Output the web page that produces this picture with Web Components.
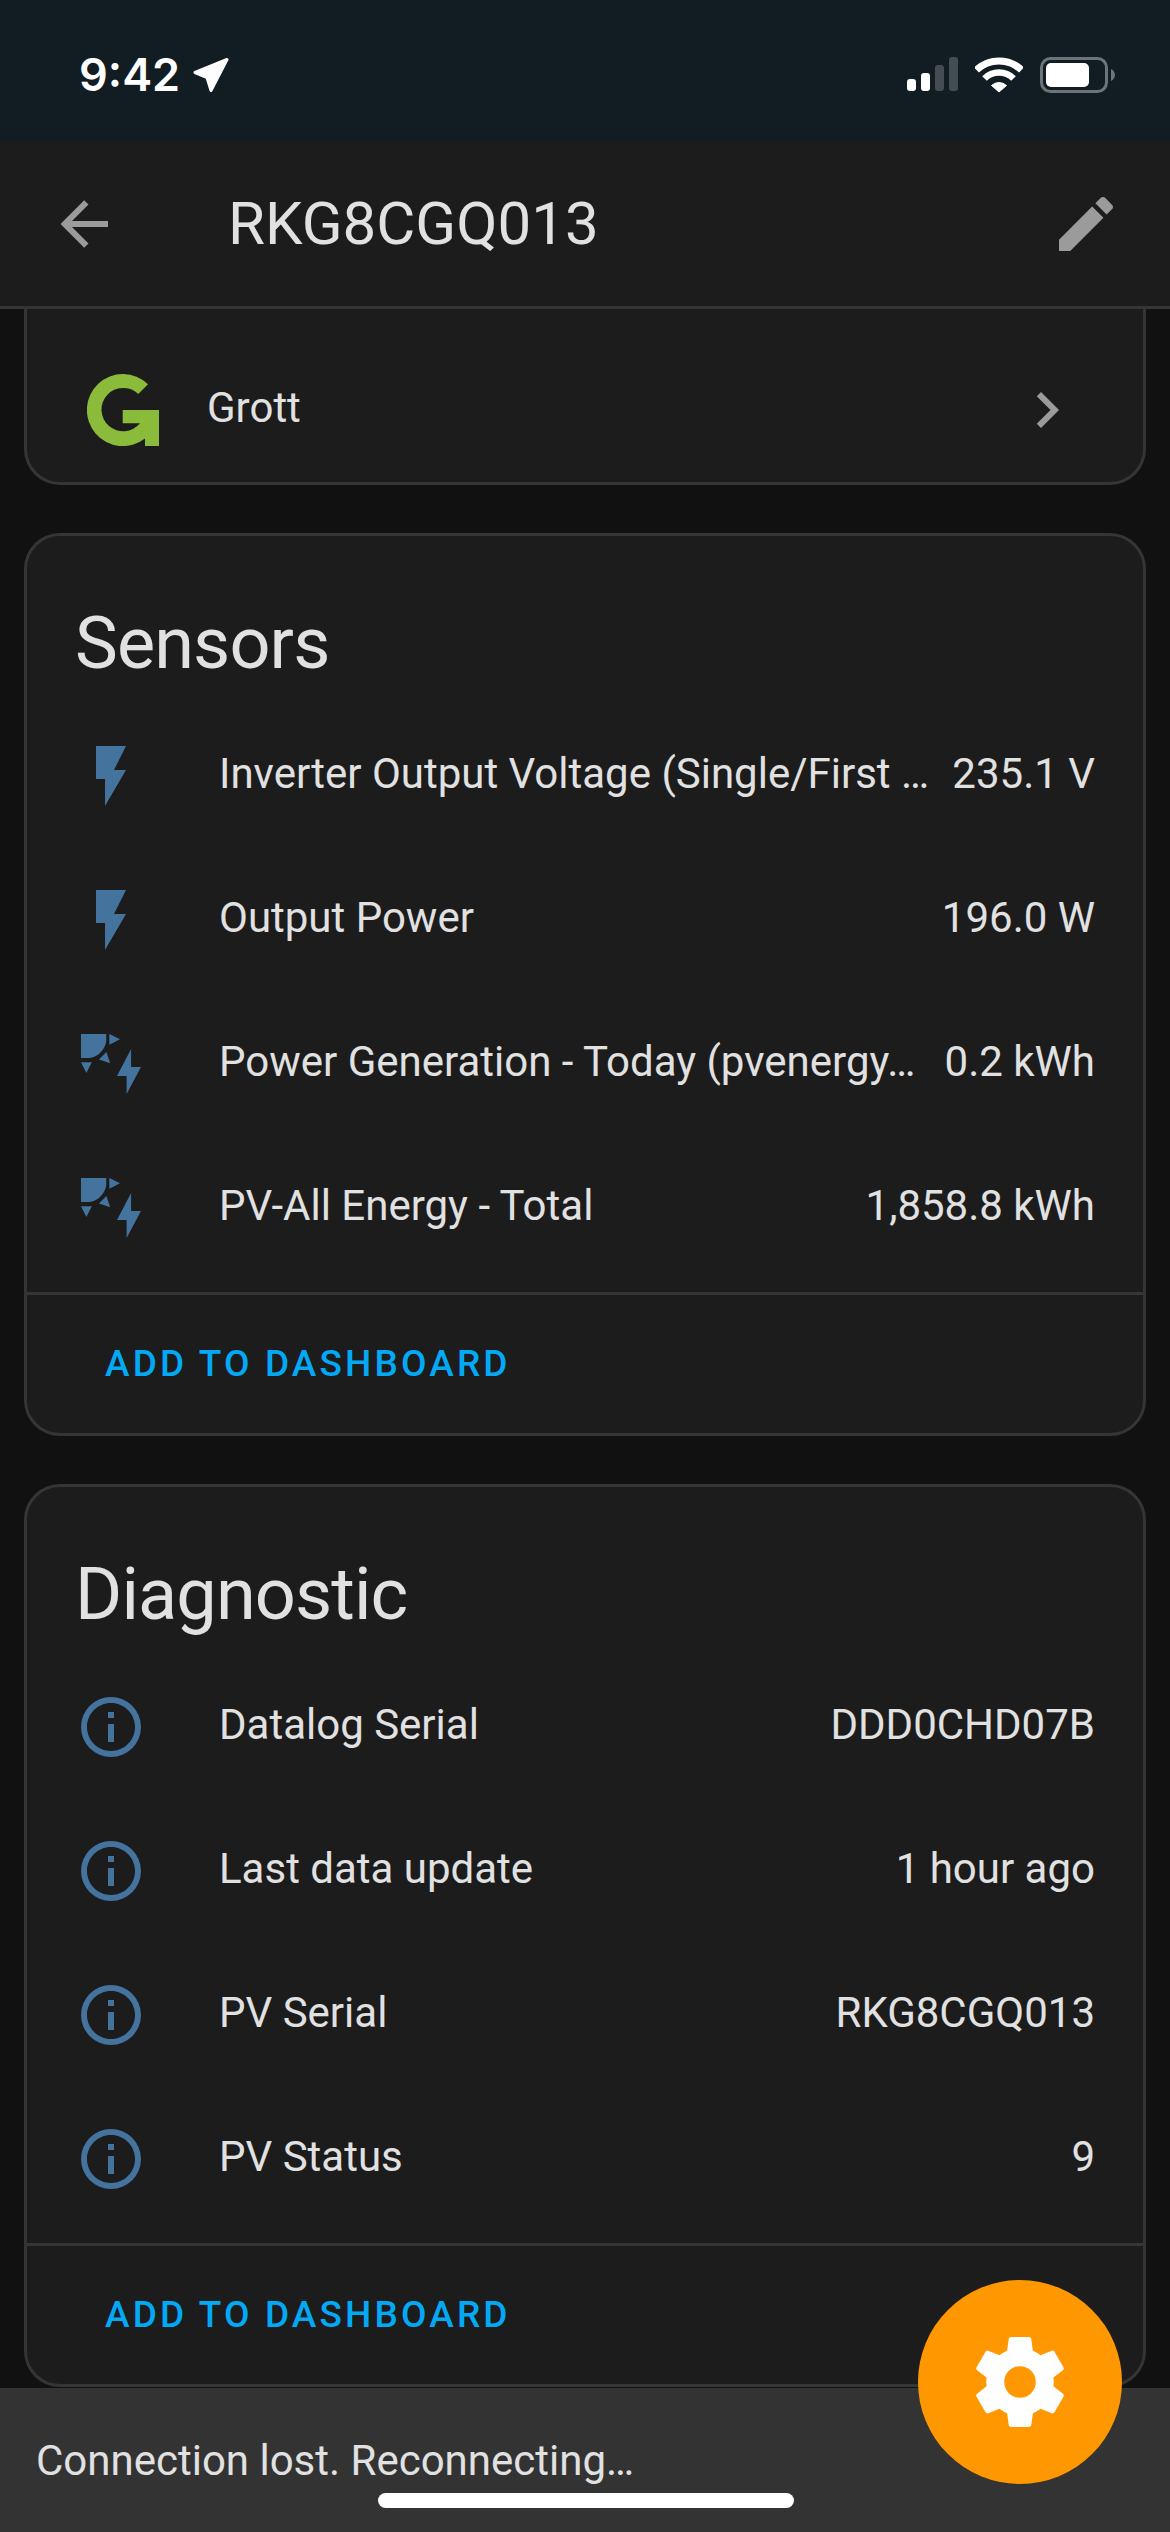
<!DOCTYPE html>
<html>
<head>
<meta charset="utf-8">
<title>RKG8CGQ013</title>
<style>
  html, body { margin: 0; padding: 0; background: #111111; }
  body { font-family: Roboto, "Liberation Sans", sans-serif; color: #e1e1e1; }
</style>
</head>
<body>
<app-shell>
  <status-bar slot="top"></status-bar>
  <top-toolbar slot="top" heading="RKG8CGQ013"></top-toolbar>

  <info-card clipped>
    <device-row name="Grott"></device-row>
  </info-card>

  <info-card heading="Sensors" action="ADD TO DASHBOARD">
    <entity-row icon="flash" name="Inverter Output Voltage (Single/First …" value="235.1 V"></entity-row>
    <entity-row icon="flash" name="Output Power" value="196.0 W"></entity-row>
    <entity-row icon="solar" name="Power Generation - Today (pvenergy…" value="0.2 kWh"></entity-row>
    <entity-row icon="solar" name="PV-All Energy - Total" value="1,858.8 kWh"></entity-row>
  </info-card>

  <info-card heading="Diagnostic" action="ADD TO DASHBOARD">
    <entity-row icon="info" name="Datalog Serial" value="DDD0CHD07B"></entity-row>
    <entity-row icon="info" name="Last data update" value="1 hour ago"></entity-row>
    <entity-row icon="info" name="PV Serial" value="RKG8CGQ013"></entity-row>
    <entity-row icon="info" name="PV Status" value="9"></entity-row>
  </info-card>

  <snack-bar slot="overlay">Connection lost. Reconnecting…</snack-bar>
  <fab-button slot="overlay"></fab-button>
</app-shell>

<script>
const ICONS = {
  flash: 'M7,2V13H10V22L17,10H13L17,2H7Z',
  solar: 'M11.45,2V5.55L15,3.77L11.45,2M10.45,8L8,10.46L11.75,11.71L10.45,8M2,2H10.4V4.6C9.9,7.6 7.2,10 4.4,10H2V2M2,11.4H5.6L3.8,15L2,11.4M18.7,7L14,16H17.2V22L22,13H18.7V7Z',
  info: 'M11,9H13V7H11M12,20C7.59,20 4,16.41 4,12C4,7.59 7.59,4 12,4C16.41,4 20,7.59 20,12C20,16.41 16.41,20 12,20M12,2A10,10 0 0,0 2,12A10,10 0 0,0 12,22A10,10 0 0,0 22,12A10,10 0 0,0 12,2M11,17H13V11H11V17Z',
  back: 'M20,11V13H8L13.5,18.5L12.08,19.92L4.16,12L12.08,4.08L13.5,5.5L8,11H20Z',
  pencil: 'M20.71,7.04C21.1,6.65 21.1,6 20.71,5.63L18.37,3.29C18,2.9 17.35,2.9 16.96,3.29L15.12,5.12L18.87,8.87M3,17.25V21H6.75L17.81,9.93L14.06,6.18L3,17.25Z',
  chevron: 'M8.59,16.58L13.17,12L8.59,7.41L10,6L16,12L10,18L8.59,16.58Z',
  cog: 'M12,15.5A3.5,3.5 0 0,1 8.5,12A3.5,3.5 0 0,1 12,8.5A3.5,3.5 0 0,1 15.5,12A3.5,3.5 0 0,1 12,15.5M19.43,12.97C19.47,12.65 19.5,12.33 19.5,12C19.5,11.67 19.47,11.34 19.43,11L21.54,9.37C21.73,9.22 21.78,8.95 21.66,8.73L19.66,5.27C19.54,5.05 19.27,4.96 19.05,5.05L16.56,6.05C16.04,5.66 15.5,5.32 14.87,5.07L14.5,2.42C14.46,2.18 14.25,2 14,2H10C9.75,2 9.54,2.18 9.5,2.42L9.13,5.07C8.5,5.32 7.96,5.66 7.44,6.05L4.95,5.05C4.73,4.96 4.46,5.05 4.34,5.27L2.34,8.73C2.21,8.95 2.27,9.22 2.46,9.37L4.57,11C4.53,11.34 4.5,11.67 4.5,12C4.5,12.33 4.53,12.65 4.57,12.97L2.46,14.63C2.27,14.78 2.21,15.05 2.34,15.27L4.34,18.73C4.46,18.95 4.73,19.03 4.95,18.95L7.44,17.94C7.96,18.34 8.5,18.68 9.13,18.93L9.5,21.58C9.54,21.82 9.75,22 10,22H14C14.25,22 14.46,21.82 14.5,21.58L14.87,18.93C15.5,18.67 16.04,18.34 16.56,17.94L19.05,18.95C19.27,19.03 19.54,18.95 19.66,18.73L21.66,15.27C21.78,15.05 21.73,14.78 21.54,14.63L19.43,12.97Z'
};

class MdiIcon extends HTMLElement {
  constructor() {
    super();
    this.attachShadow({mode: 'open'});
  }
  connectedCallback() {
    const size = this.getAttribute('size') || 72;
    this.shadowRoot.innerHTML = `
      <style>
        :host { display: block; flex: none; width: ${size}px; height: ${size}px; color: inherit; }
        svg { display: block; width: 100%; height: 100%; fill: currentColor; }
      </style>
      <svg viewBox="0 0 24 24"><path d="${ICONS[this.getAttribute('name')]}"></path></svg>
    `;
  }
}
customElements.define('mdi-icon', MdiIcon);

class AppShell extends HTMLElement {
  constructor() {
    super();
    this.attachShadow({mode: 'open'}).innerHTML = `
      <style>
        :host { display: flex; flex-direction: column; position: relative; width: 1170px; height: 2532px; overflow: hidden; background: #111111; }
        .content { flex: 1; min-height: 0; overflow: hidden; display: flex; flex-direction: column; gap: 48px; padding: 0 24px; }
      </style>
      <slot name="top"></slot>
      <div class="content"><slot></slot></div>
      <slot name="overlay"></slot>
    `;
  }
}
customElements.define('app-shell', AppShell);

class StatusBar extends HTMLElement {
  constructor() {
    super();
    this.attachShadow({mode: 'open'}).innerHTML = `
      <style>
        :host { display: flex; align-items: center; justify-content: space-between; box-sizing: border-box; height: 141px; padding: 0 55px 0 79px; background: #111d23; color: #fff; }
        .left { display: flex; align-items: center; gap: 13px; margin-top: 8px; }
        .time { font: 600 45px/46px Inter, "Liberation Sans", sans-serif; }
        .right { display: flex; align-items: center; gap: 17px; margin-top: 8px; }
        svg { display: block; }
      </style>
      <div class="left">
        <span class="time">9:42</span>
        <svg width="36" height="36" viewBox="0 0 36 36"><path d="M34,2.5L2,15.5L14,20.5L18,33.5Z" fill="#fff" stroke="#fff" stroke-width="3" stroke-linejoin="round"></path></svg>
      </div>
      <div class="right">
        <svg width="51" height="36" viewBox="0 0 51 36">
          <rect x="0" y="22" width="9" height="12" rx="3" fill="#fff"></rect>
          <rect x="14" y="16" width="9" height="18" rx="3" fill="#fff"></rect>
          <rect x="28" y="8" width="9" height="26" rx="3" fill="#434d52"></rect>
          <rect x="42" y="0" width="9" height="34" rx="3" fill="#434d52"></rect>
        </svg>
        <svg width="48" height="36" viewBox="0 0 48 36" fill="none" stroke="#fff" stroke-linejoin="round">
          <path d="M1.5,13A32.5,32.5 0 0 1 46.5,13" stroke-width="7"></path>
          <path d="M9.5,21.5A20.5,20.5 0 0 1 38.5,21.5" stroke-width="6.5"></path>
          <path d="M24,35L16.5,28.5A11,11 0 0 1 31.5,28.5Z" fill="#fff" stroke-width="1"></path>
        </svg>
        <svg width="75" height="36" viewBox="0 0 75 36">
          <rect x="1.5" y="1.5" width="65" height="33" rx="9" fill="none" stroke="#6b7579" stroke-width="3"></rect>
          <rect x="6" y="6" width="43" height="24" rx="5" fill="#fff"></rect>
          <path d="M71,12C73.5,13 75,15.5 75,18C75,20.5 73.5,23 71,24Z" fill="#6b7579"></path>
        </svg>
      </div>
    `;
  }
}
customElements.define('status-bar', StatusBar);

class TopToolbar extends HTMLElement {
  constructor() {
    super();
    this.attachShadow({mode: 'open'});
  }
  connectedCallback() {
    this.shadowRoot.innerHTML = `
      <style>
        :host { display: flex; align-items: center; box-sizing: border-box; height: 168px; padding: 0 48px; background: #1c1c1c; border-bottom: 3px solid #353535; color: #9b9b9b; }
        h1 { flex: 1; margin: 0 0 0 108px; font: 400 60px/72px Roboto, sans-serif; color: #e1e1e1; }
      </style>
      <mdi-icon name="back"></mdi-icon>
      <h1>${this.getAttribute('heading')}</h1>
      <mdi-icon name="pencil"></mdi-icon>
    `;
  }
}
customElements.define('top-toolbar', TopToolbar);

class InfoCard extends HTMLElement {
  constructor() {
    super();
    this.attachShadow({mode: 'open'});
  }
  connectedCallback() {
    const heading = this.getAttribute('heading');
    const action = this.getAttribute('action');
    this.shadowRoot.innerHTML = `
      <style>
        :host { display: block; flex: none; box-sizing: border-box; background: #1c1c1c; border: 3px solid #353535; border-radius: 36px; }
        :host([clipped]) { border-top: 0; border-radius: 0 0 36px 36px; }
        h2 { margin: 0; box-sizing: border-box; height: 168px; padding: 60px 48px 0; font: 400 72px/96px Roboto, sans-serif; letter-spacing: -0.012em; color: #e1e1e1; }
        .rows { display: block; padding-bottom: 12px; }
        .actions { height: 141px; box-sizing: border-box; border-top: 3px solid #353535; display: flex; align-items: center; padding-left: 78px; }
        .actions span { font: 500 37px/48px Roboto, sans-serif; letter-spacing: 0.085em; color: #03a9f4; }
      </style>
      ${heading ? `<h2>${heading}</h2>` : ''}
      <div class="${heading ? 'rows' : ''}"><slot></slot></div>
      ${action ? `<div class="actions"><span>${action}</span></div>` : ''}
    `;
  }
}
customElements.define('info-card', InfoCard);

class EntityRow extends HTMLElement {
  constructor() {
    super();
    this.attachShadow({mode: 'open'});
  }
  connectedCallback() {
    this.shadowRoot.innerHTML = `
      <style>
        :host { display: flex; align-items: center; height: 144px; padding: 0 48px; font: 400 42px/60px Roboto, sans-serif; color: #e1e1e1; }
        mdi-icon { color: #44739e; margin-right: 72px; }
        .name { flex: 1; min-width: 0; white-space: nowrap; overflow: hidden; padding-bottom: 4px; }
        .value { flex: none; margin-left: 24px; white-space: nowrap; padding-bottom: 4px; }
      </style>
      <mdi-icon name="${this.getAttribute('icon')}"></mdi-icon>
      <span class="name">${this.getAttribute('name')}</span>
      <span class="value">${this.getAttribute('value')}</span>
    `;
  }
}
customElements.define('entity-row', EntityRow);

class DeviceRow extends HTMLElement {
  constructor() {
    super();
    this.attachShadow({mode: 'open'});
  }
  connectedCallback() {
    this.shadowRoot.innerHTML = `
      <style>
        :host { display: flex; align-items: center; box-sizing: border-box; height: 173px; padding: 29px 60px 0 60px; font: 400 42px/60px Roboto, sans-serif; color: #e1e1e1; }
        svg { display: block; flex: none; margin-right: 48px; }
        .name { flex: 1; padding-bottom: 4px; }
        mdi-icon { color: #9b9b9b; }
      </style>
      <svg width="72" height="72" viewBox="0 0 72 72"><path d="M61,10.3A36,36 0 1 0 58,64.5L58,72H72V36H35.7V49.3H53A21.7,21.7 0 1 1 51.3,20Z" fill="#8bbb3b"></path></svg>
      <span class="name">${this.getAttribute('name')}</span>
      <mdi-icon name="chevron"></mdi-icon>
    `;
  }
}
customElements.define('device-row', DeviceRow);

class SnackBar extends HTMLElement {
  constructor() {
    super();
    this.attachShadow({mode: 'open'}).innerHTML = `
      <style>
        :host { display: block; position: absolute; left: 0; right: 0; bottom: 0; box-sizing: border-box; height: 144px; padding: 43px 36px 0; background: #333333; font: 400 42px/60px Roboto, sans-serif; color: #e1e1e1; }
        .home { position: absolute; left: 378px; bottom: 24px; width: 416px; height: 15px; border-radius: 8px; background: #fff; }
      </style>
      <slot></slot>
      <div class="home"></div>
    `;
  }
}
customElements.define('snack-bar', SnackBar);

class FabButton extends HTMLElement {
  constructor() {
    super();
    this.attachShadow({mode: 'open'}).innerHTML = `
      <style>
        :host { display: flex; align-items: center; justify-content: center; position: absolute; right: 48px; bottom: 48px; width: 204px; height: 204px; border-radius: 50%; background: #ff9800; color: #fff; }
      </style>
      <mdi-icon name="cog" size="108"></mdi-icon>
    `;
  }
}
customElements.define('fab-button', FabButton);
</script>
</body>
</html>
